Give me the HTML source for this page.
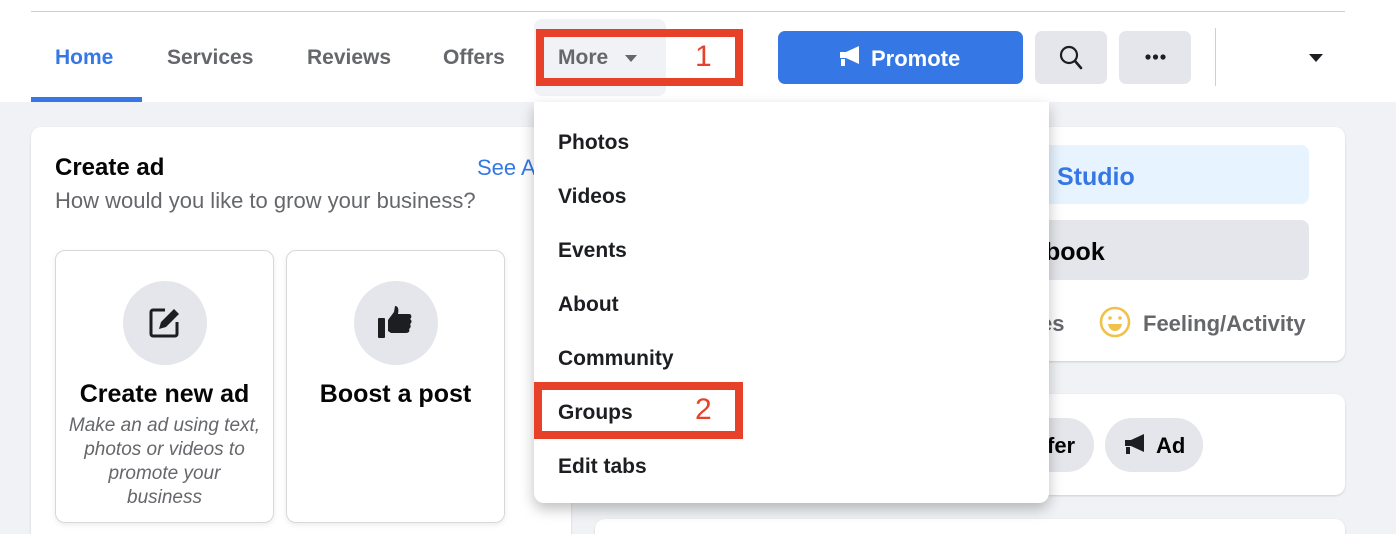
<!DOCTYPE html>
<html><head><style>
*{margin:0;padding:0;box-sizing:border-box}
html,body{width:1396px;height:534px;overflow:hidden}
body{background:#f0f2f5;font-family:"Liberation Sans",Helvetica,sans-serif;position:relative}
.a{position:absolute}
.top{left:0;top:0;width:1396px;height:102px;background:#fff}
.tab{top:46px;font-size:21px;color:#65676b;font-weight:bold}
.card{background:#fff;border-radius:10px;box-shadow:0 1px 2px rgba(0,0,0,.15)}
.sub{background:#fff;border:1px solid #d6d8dc;border-radius:10px;box-shadow:0 2px 6px rgba(0,0,0,.08)}
.circ{width:84px;height:84px;border-radius:50%;background:#e4e6eb}
.mi{left:24px;font-size:21px;color:#1c1e21;font-weight:bold}
.red{border:8px solid #e8412a}
</style></head><body>
<div class="a top"></div>
<div class="a" style="left:31px;top:11px;width:1314px;height:1px;background:#ccd0d5"></div>
<div class="a tab" style="left:55px;color:#3578e5">Home</div>
<div class="a" style="left:31px;top:97px;width:111px;height:5px;background:#3578e5"></div>
<div class="a tab" style="left:167px">Services</div>
<div class="a tab" style="left:307px">Reviews</div>
<div class="a tab" style="left:443px">Offers</div>
<div class="a" style="left:534px;top:19px;width:132px;height:77px;background:#f0f2f5;border-radius:8px"></div>
<div class="a tab" style="left:558px">More</div>
<div class="a" style="left:625px;top:55px;width:0;height:0;border-left:6px solid transparent;border-right:6px solid transparent;border-top:7px solid #65676b"></div>
<div class="a red" style="left:536px;top:29px;width:207px;height:57px"></div>
<div class="a" style="left:695px;top:40px;font-size:30px;color:#e8412a">1</div>
<div class="a" style="left:778px;top:31px;width:245px;height:53px;background:#3578e5;border-radius:7px;color:#fff;font-size:22px;font-weight:bold;line-height:55px;padding-left:93px">Promote</div>
<svg class="a" style="left:838px;top:46px" width="24" height="22" viewBox="0 0 24 22"><path d="M2 6h6l13-6v18L8 12H2z" fill="#fff"/><rect x="3" y="13" width="4" height="7" fill="#fff"/></svg>
<div class="a" style="left:1035px;top:31px;width:72px;height:53px;background:#e4e6eb;border-radius:7px"></div>
<svg class="a" style="left:1058px;top:45px" width="26" height="26" viewBox="0 0 26 26"><circle cx="11" cy="10" r="8" fill="none" stroke="#1c1e21" stroke-width="2.2"/><path d="M17 16l6 7" stroke="#1c1e21" stroke-width="2.6" stroke-linecap="round"/></svg>
<div class="a" style="left:1119px;top:31px;width:72px;height:53px;background:#e4e6eb;border-radius:7px"></div>
<svg class="a" style="left:1144px;top:53px" width="24" height="8" viewBox="0 0 24 8"><circle cx="4" cy="4" r="2.6" fill="#1c1e21"/><circle cx="11.5" cy="4" r="2.6" fill="#1c1e21"/><circle cx="19" cy="4" r="2.6" fill="#1c1e21"/></svg>
<div class="a" style="left:1215px;top:28px;width:1px;height:58px;background:#ccd0d5"></div>
<div class="a" style="left:1309px;top:54px;border-left:7px solid transparent;border-right:7px solid transparent;border-top:8px solid #1c1e21"></div>

<div class="a card" style="left:31px;top:127px;width:540px;height:420px"></div>
<div class="a" style="left:55px;top:154px;font-size:24px;font-weight:bold;color:#050505">Create ad</div>
<div class="a" style="left:477px;top:155px;font-size:22px;color:#3578e5">See A</div>
<div class="a" style="left:55px;top:188px;font-size:22px;color:#65676b">How would you like to grow your business?</div>
<div class="a sub" style="left:55px;top:250px;width:219px;height:273px"></div>
<div class="a sub" style="left:286px;top:250px;width:219px;height:273px"></div>
<div class="a circ" style="left:123px;top:281px"></div>
<div class="a circ" style="left:354px;top:281px"></div>
<svg class="a" style="left:147px;top:305px" width="36" height="36" viewBox="0 0 36 36"><path d="M18 5H6a2 2 0 0 0-2 2v22a2 2 0 0 0 2 2h22a2 2 0 0 0 2-2V17" fill="none" stroke="#1c1e21" stroke-width="3"/><path d="M12 24l2-7L27 4l5 5-13 13z" fill="#1c1e21"/></svg>
<svg class="a" style="left:377px;top:304px" width="38" height="38" viewBox="0 0 38 38"><rect x="1" y="14" width="7" height="20" rx="1" fill="#1c1e21"/><path d="M11 16l6-8 1-6c3 0 4 3 3 8h11c3 0 3 4 1 5 2 1 2 4 0 5 1 1 1 4-1 5 1 2 0 4-3 4H14l-3-2z" fill="#1c1e21"/></svg>
<div class="a" style="left:50px;top:380px;width:229px;text-align:center;font-size:25px;font-weight:bold;color:#050505">Create new ad</div>
<div class="a" style="left:281px;top:380px;width:229px;text-align:center;font-size:25px;font-weight:bold;color:#050505">Boost a post</div>
<div class="a" style="left:50px;top:414px;width:229px;text-align:center;font-size:19px;font-style:italic;color:#65676b;line-height:24px">Make an ad using text,<br>photos or videos to<br>promote your<br>business</div>

<div class="a card" style="left:595px;top:127px;width:750px;height:234px"></div>
<div class="a" style="left:1000px;top:145px;width:309px;height:59px;background:#e7f3ff;border-radius:8px"></div>
<div class="a" style="left:1057px;top:163px;font-size:25px;font-weight:bold;color:#3578e5">Studio</div>
<div class="a" style="left:1000px;top:220px;width:309px;height:60px;background:#e4e6eb;border-radius:8px"></div>
<div class="a" style="left:1045px;top:238px;font-size:25px;font-weight:bold;color:#050505">book</div>
<div class="a" style="left:1040px;top:311px;font-size:22px;font-weight:bold;color:#65676b">es</div>
<svg class="a" style="left:1099px;top:306px" width="32" height="32" viewBox="0 0 32 32"><circle cx="16" cy="16" r="14" fill="#fff" stroke="#f0c24c" stroke-width="2.6"/><circle cx="11" cy="12" r="1.8" fill="#f0c24c"/><circle cx="21" cy="12" r="1.8" fill="#f0c24c"/><path d="M9 18h14c-1 5-4 7-7 7s-6-2-7-7z" fill="#f0c24c"/></svg>
<div class="a" style="left:1143px;top:311px;font-size:22px;font-weight:bold;color:#65676b">Feeling/Activity</div>
<div class="a card" style="left:595px;top:394px;width:750px;height:101px"></div>
<div class="a" style="left:1000px;top:418px;width:94px;height:54px;background:#e4e6eb;border-radius:27px"></div>
<div class="a" style="left:1047px;top:433px;font-size:22px;font-weight:bold;color:#050505">fer</div>
<div class="a" style="left:1105px;top:418px;width:98px;height:54px;background:#e4e6eb;border-radius:27px"></div>
<svg class="a" style="left:1123px;top:434px" width="24" height="22" viewBox="0 0 24 22"><path d="M2 6h6l13-6v18L8 12H2z" fill="#1c1e21"/><rect x="3" y="13" width="4" height="7" fill="#1c1e21"/></svg>
<div class="a" style="left:1156px;top:433px;font-size:22px;font-weight:bold;color:#050505">Ad</div>
<div class="a card" style="left:595px;top:519px;width:750px;height:40px"></div>

<div class="a" style="left:534px;top:102px;width:515px;height:401px;background:#fff;border-radius:0 0 10px 10px;box-shadow:0 6px 14px rgba(0,0,0,.25)">
<div class="a mi" style="top:29px">Photos</div>
<div class="a mi" style="top:83px">Videos</div>
<div class="a mi" style="top:137px">Events</div>
<div class="a mi" style="top:191px">About</div>
<div class="a mi" style="top:245px">Community</div>
<div class="a mi" style="top:299px">Groups</div>
<div class="a mi" style="top:353px">Edit tabs</div>
</div>
<div class="a red" style="left:534px;top:382px;width:209px;height:57px"></div>
<div class="a" style="left:695px;top:393px;font-size:30px;color:#e8412a">2</div>
</body></html>
